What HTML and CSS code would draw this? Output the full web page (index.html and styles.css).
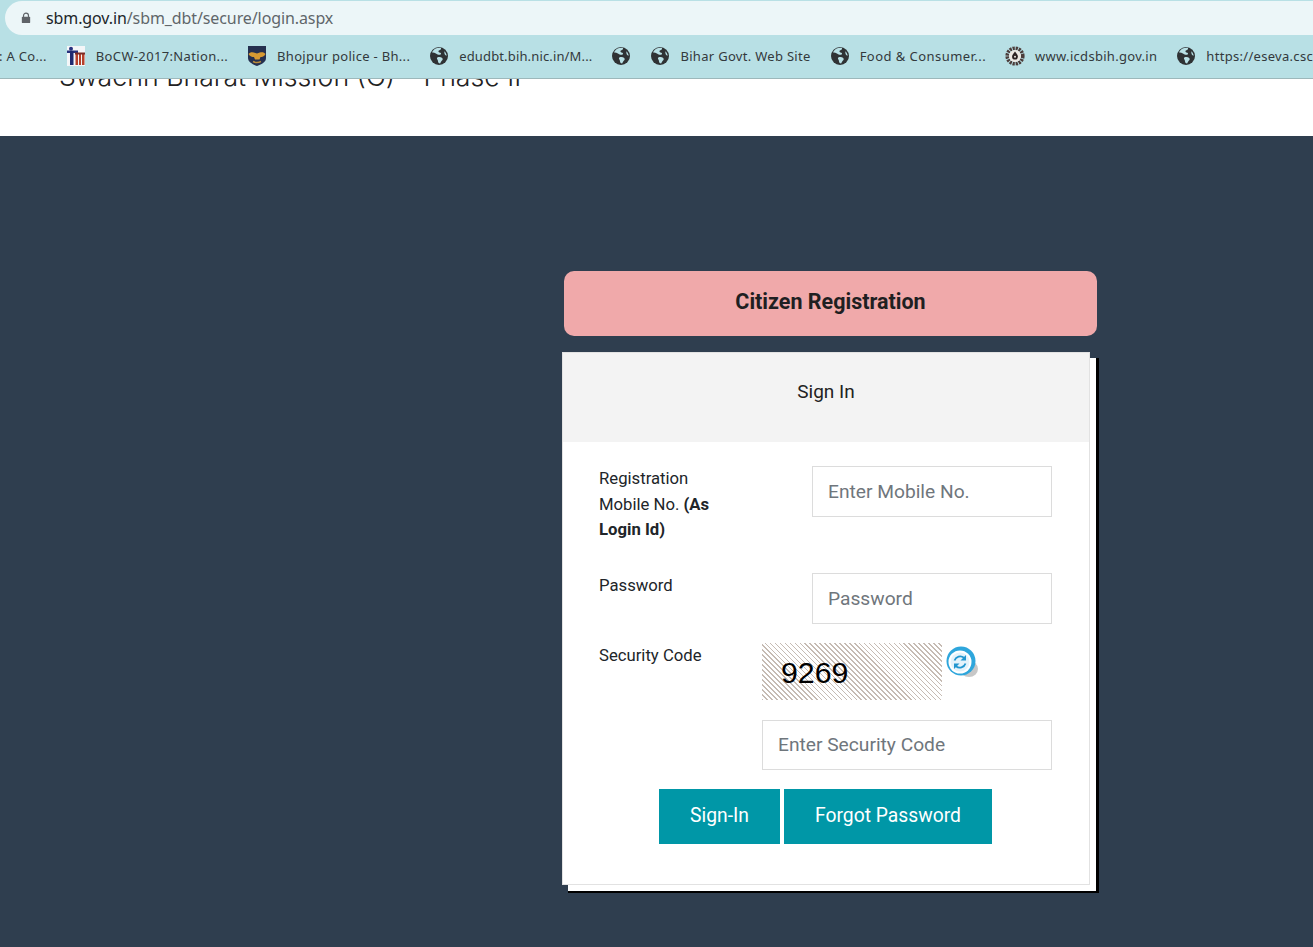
FILE: index.html
```html
<!DOCTYPE html>
<html lang="en">
<head>
<meta charset="utf-8">
<title>Citizen Registration</title>
<link rel="stylesheet" href="styles.css">
</head>
<body>
<svg class="defs" width="0" height="0" aria-hidden="true">
  <symbol id="globe" viewBox="0 0 20 20">
    <circle cx="10" cy="10" r="9" fill="#2f3234"/>
    <path d="M6.600 2.400c1.800-.7 4-.9 5.400-.4.200 1.100-.5 1.900-1.600 2.200-.9.300-1.200 1-.7 1.800.5.700 1.600.5 2.200 1.200.4.600-.1 1.400-.9 1.500-1.400.2-2.900-.4-4.100-1.200C5.500 6.700 4.200 6.300 3 6.600c.7-1.900 2-3.300 3.600-4.200z" fill="#b8e0e5"/>
    <path d="M8.800 11.200c1.500-.5 3.400-.2 4.400.7.800.8.600 1.900-.2 2.600-.8.700-1 1.700-1.900 2.900-1 .1-1.800-.6-2-1.700-.2-1-.3-1.700-.9-2.400-.5-.9-.2-1.800.6-2.100z" fill="#b8e0e5"/>
    <path d="M15.500 5.300c1.200 1.300 2 2.900 2.200 4.400-.8-.1-1.600-.6-2-1.400-.4-.9-.5-2-.2-3z" fill="#b8e0e5"/>
  </symbol>
</svg>

<header class="browser">
  <div class="address-row">
    <div class="address-pill">
      <svg class="lock" viewBox="0 0 12 14" aria-hidden="true">
        <path d="M3 6V4.200a3 3 0 0 1 6 0V6" fill="none" stroke="#5f6368" stroke-width="1.400"/>
        <rect x="1" y="5.500" width="10" height="7.500" rx="1" fill="#5f6368"/>
      </svg>
      <span class="url"><span class="url-host">sbm.gov.in</span>/sbm_dbt/secure/login.aspx</span>
    </div>
  </div>
  <nav class="bookmarks">
    <span class="bookmark cut-off"><span class="label">: A Co...</span></span>
    <a class="bookmark">
      <svg class="fav" viewBox="0 0 20 20" aria-hidden="true">
        <rect x="1" y="0" width="18" height="20" fill="#f4f6f8"/>
        <path d="M1 4.500h11V7H1z" fill="#27327e"/>
        <circle cx="5" cy="2.800" r="2" fill="#27327e"/>
        <rect x="4" y="5" width="3.500" height="14" fill="#1f2a70"/>
        <rect x="9.500" y="8" width="2.500" height="11" fill="#b5402a"/>
        <rect x="13" y="8" width="2" height="11" fill="#b5402a"/>
        <rect x="16" y="8" width="2.500" height="11" fill="#b5402a"/>
        <rect x="9" y="6.500" width="10" height="2" fill="#7b2d26"/>
      </svg>
      <span class="label label-wide">BoCW-2017:Nation...</span>
    </a>
    <a class="bookmark">
      <svg class="fav" viewBox="0 0 20 20" aria-hidden="true">
        <path d="M1 0h18v12c0 4-4 6-9 8C5 18 1 16 1 12z" fill="#25304f"/>
        <path d="M1.500 8c2-2.500 4.500-2 8.500-.5 4-1.500 6.500-2 8.500.5-1 2.500-3.500 3-5 3l-1 2.500H8L7 11c-1.500 0-4.500-.5-5.500-3z" fill="#d79a32"/>
        <path d="M6 15.500c2.500 1.200 5.500 1.200 8 0" stroke="#b98a3a" stroke-width="1.400" fill="none"/>
      </svg>
      <span class="label">Bhojpur police - Bh...</span>
    </a>
    <a class="bookmark">
      <svg class="fav" aria-hidden="true"><use href="#globe"/></svg>
      <span class="label label-tight">edudbt.bih.nic.in/M...</span>
    </a>
    <a class="bookmark">
      <svg class="fav" aria-hidden="true"><use href="#globe"/></svg>
    </a>
    <a class="bookmark">
      <svg class="fav" aria-hidden="true"><use href="#globe"/></svg>
      <span class="label">Bihar Govt. Web Site</span>
    </a>
    <a class="bookmark">
      <svg class="fav" aria-hidden="true"><use href="#globe"/></svg>
      <span class="label label-wider">Food &amp; Consumer...</span>
    </a>
    <a class="bookmark">
      <svg class="fav" viewBox="0 0 20 20" aria-hidden="true">
        <circle cx="10" cy="10" r="7.800" fill="none" stroke="#4b3c3a" stroke-width="3.600" stroke-dasharray="2.200 .9"/>
        <circle cx="10" cy="10" r="6" fill="#ece7e2"/>
        <path d="M10 5.500c2 2.500 2.900 3.700 2.900 5.200a2.900 2.900 0 0 1-5.800 0c0-1.500.9-2.700 2.900-5.200z" fill="#2b2222"/>
        <circle cx="10" cy="10.800" r="1" fill="#ece7e2"/>
      </svg>
      <span class="label">www.icdsbih.gov.in</span>
    </a>
    <a class="bookmark">
      <svg class="fav" aria-hidden="true"><use href="#globe"/></svg>
      <span class="label">https://eseva.cscdigital</span>
    </a>
  </nav>
</header>

<section class="site-head">
  <h1 class="site-title">Swachh Bharat Mission (G) – Phase II</h1>
</section>

<main class="stage">
  <div class="login-column">
    <a class="register-banner">Citizen Registration</a>
    <form class="card">
      <div class="card-head">Sign In</div>
      <div class="card-body">
        <div class="row row-mobile">
          <label class="field-label">Registration Mobile No. <b>(As Login Id)</b></label>
          <div class="text-input">Enter Mobile No.</div>
        </div>
        <div class="row row-password">
          <label class="field-label">Password</label>
          <div class="text-input">Password</div>
        </div>
        <div class="row row-captcha">
          <label class="field-label">Security Code</label>
          <div class="captcha-stack">
            <div class="captcha-line">
              <div class="captcha">9269</div>
              <svg class="refresh" viewBox="0 0 34 34" aria-hidden="true">
                <ellipse cx="23" cy="23" rx="9" ry="8" fill="#b4b4b4" opacity=".75"/>
                <circle cx="15" cy="15" r="14.500" fill="#2ea6dc"/>
                <circle cx="14" cy="16" r="11.500" fill="#fff"/>
                <circle cx="14" cy="16" r="9.500" fill="#e4f3fb"/>
                <path d="M8.500 14.500a6 6 0 0 1 9.500-2.800" fill="none" stroke="#2196cf" stroke-width="1.800"/>
                <path d="M20 9v5.500h-5.500z" fill="#2196cf"/>
                <path d="M19.500 17.500a6 6 0 0 1-9.500 2.800" fill="none" stroke="#2196cf" stroke-width="1.800"/>
                <path d="M8 23v-5.500h5.500z" fill="#2196cf"/>
              </svg>
            </div>
            <div class="text-input wide">Enter Security Code</div>
          </div>
        </div>
        <div class="actions">
          <button class="btn btn-signin" type="button">Sign-In</button>
          <button class="btn btn-forgot" type="button">Forgot Password</button>
        </div>
      </div>
    </form>
  </div>
</main>
</body>
</html>
```
FILE: styles.css
```css
* { box-sizing: border-box; }
html, body { margin: 0; height: 100%; }
body {
  width: 1313px;
  height: 947px;
  overflow: hidden;
  display: flex;
  flex-direction: column;
  background: #2f3e4f;
  font-family: Roboto, "Liberation Sans", sans-serif;
}
.defs { display: block; height: 0; }

/* Browser chrome */
.browser {
  position: relative;
  z-index: 2;
  flex: none;
  background: #b8e0e5;
  border-bottom: 1px solid #9db8bb;
  height: 79px;
}
.address-row { padding: 1px 0 0 5px; }
.address-pill {
  height: 34px;
  background: #ecf6f8;
  border-radius: 17px 0 0 17px;
  display: flex;
  align-items: center;
  padding-left: 16px;
  gap: 15px;
}
.lock { width: 10px; height: 12px; flex: none; }
.url {
  font-family: "Noto Sans", sans-serif;
  font-size: 16px;
  letter-spacing: -.1px;
  color: #60666a;
  white-space: nowrap;
}
.url-host { color: #202528; }
.bookmarks {
  height: 43px;
  padding-bottom: 2px;
  display: flex;
  align-items: center;
  gap: 19px;
  overflow: hidden;
  white-space: nowrap;
}
.bookmark {
  display: flex;
  align-items: center;
  gap: 10px;
  flex: none;
}
.cut-off { margin-left: -1px; }
.fav { width: 20px; height: 20px; flex: none; }
.label {
  font-family: "Noto Sans", sans-serif;
  font-size: 13px;
  letter-spacing: .3px;
  color: #33393c;
}
.label-wide { letter-spacing: .35px; }
.label-wider { letter-spacing: .45px; }
.label-tight { letter-spacing: .15px; }

/* White site header, scrolled under the toolbar */
.site-head {
  flex: none;
  height: 57px;
  background: #fff;
  overflow: hidden;
  padding-left: 59px;
}
.site-title {
  margin: -21px 0 0;
  font-family: Inter, sans-serif;
  font-weight: 300;
  font-size: 26.700px;
  line-height: 36px;
  color: #222;
  white-space: nowrap;
}

/* Dark stage */
.stage {
  flex: 1;
  padding: 135px 0 0 562px;
}
.login-column {
  width: 535px;
  display: flex;
  flex-direction: column;
  gap: 16px;
}
.register-banner {
  margin-left: 2px;
  height: 65px;
  padding-bottom: 5px;
  border-radius: 10px;
  background: #f0a9aa;
  color: #1f1f22;
  font-size: 21.500px;
  font-weight: 700;
  display: flex;
  align-items: center;
  justify-content: center;
}
.card {
  width: 528px;
  height: 533px;
  background: #fff;
  border: 1px solid #e2e2e2;
  box-shadow: 6px 6px 0 #fff, 9px 8px 0 #000, 6px 8px 0 #000, 9px 6px 0 #000;
}
.card-head {
  height: 89px;
  padding-bottom: 12px;
  background: #f3f3f3;
  display: flex;
  align-items: center;
  justify-content: center;
  font-size: 19px;
  color: #222;
}
.card-body { padding: 24px 37px 0 36px; }
.row {
  display: flex;
  justify-content: space-between;
  align-items: flex-start;
}
.row-mobile { height: 107px; }
.row-password { height: 70px; }
.field-label {
  font-size: 16.700px;
  line-height: 25.500px;
  color: #212529;
}
.row-mobile .field-label { width: 130px; }
.text-input {
  width: 240px;
  height: 51px;
  border: 1px solid #dcdcdc;
  background: #fff;
  padding-left: 15px;
  display: flex;
  align-items: center;
  font-size: 19.200px;
  color: #6f767c;
}
.text-input.wide { width: 290px; height: 50px; padding-bottom: 2px; }
.captcha-stack {
  display: flex;
  flex-direction: column;
  gap: 20px;
}
.captcha-line {
  display: flex;
  align-items: flex-start;
  gap: 4px;
}
.captcha {
  width: 180px;
  height: 57px;
  padding: 11px 0 0 19px;
  font-family: "Liberation Sans", sans-serif;
  font-size: 30.300px;
  line-height: 37px;
  color: #000;
  background: repeating-linear-gradient(45deg, #c6bbb3 0 1.100px, #fff 1.100px 3.500px);
}
.refresh { width: 34px; height: 34px; margin-top: 3px; flex: none; }
.actions {
  display: flex;
  justify-content: center;
  gap: 4px;
  margin-top: 19px;
}
.btn {
  height: 55px;
  border: 0;
  background: #0097a7;
  color: #fff;
  font-family: Roboto, sans-serif;
  font-size: 19.300px;
  padding: 0 0 2px;
}
.btn-signin { width: 121px; }
.btn-forgot { width: 208px; }
```
